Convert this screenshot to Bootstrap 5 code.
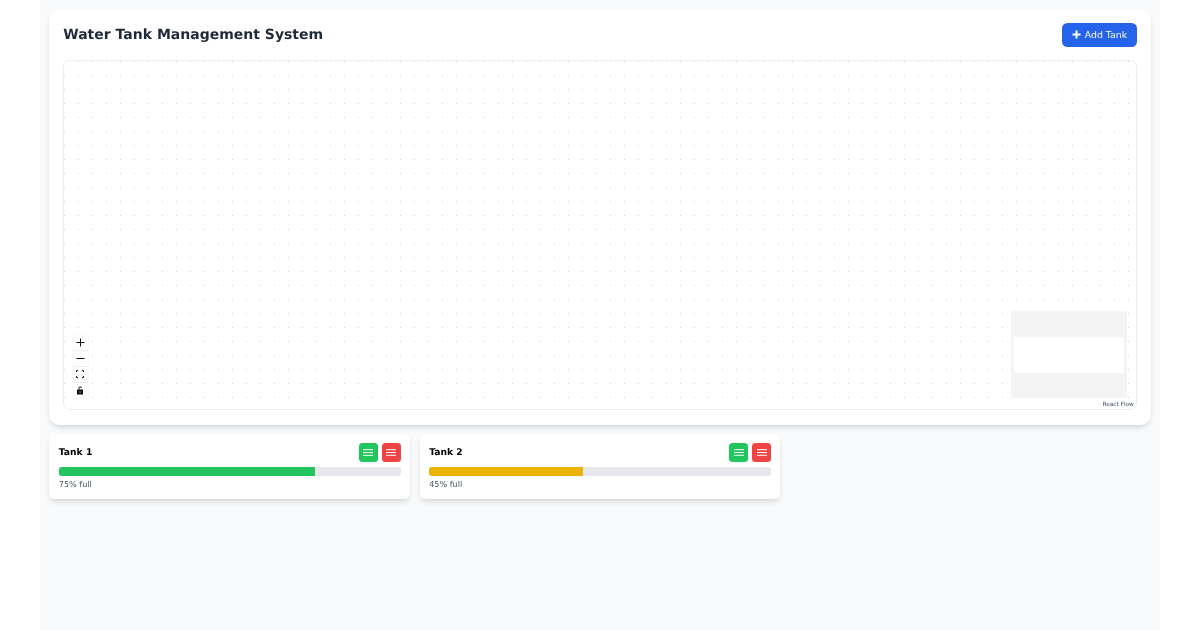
<!DOCTYPE html>
<html lang="en">
<head>
<meta charset="utf-8">
<title>Water Tank Management System</title>
<link href="https://cdn.jsdelivr.net/npm/bootstrap@5.3.0/dist/css/bootstrap.min.css" rel="stylesheet">
<style>
html,body{height:100%;background:#fff;overflow:hidden}
body{font-family:"DejaVu Sans",sans-serif;text-rendering:geometricPrecision}
.shell{width:1120px;height:630px;margin:0 auto;background:#f9fafb;padding:9.2px;will-change:transform}
.panel{background:#fff;border-radius:11px;padding:13.8px 14px;height:416px;box-shadow:0 4px 6px -1px rgba(0,0,0,.1),0 2px 4px -2px rgba(0,0,0,.1);margin-bottom:9px}
.panel-title{font-size:14px;font-weight:700;color:#1f2937;margin:0;line-height:24px}
.add-btn{background:#2563eb;color:#fff;border:0;border-radius:5.5px;height:24px;width:75px;padding:0 0 0 10px;font-size:9.35px;gap:4px;white-space:nowrap}
.add-btn svg{display:block;flex:none}
.flow{position:relative;height:350px;margin-top:13.5px;border:1px solid #eceef1;border-radius:7px;overflow:hidden;background-color:#fff}
.dots{position:absolute;left:-.2px;top:-.5px;width:1074px;height:351px;display:block}
.ctl{position:absolute;left:8.4px;bottom:11.2px;width:15.7px;box-shadow:0 0 2px rgba(0,0,0,.08);background:#fff}
.ctl-btn{height:15.8px;display:flex;align-items:center;justify-content:center;border-bottom:1px solid #eee;background:#fefefe}
.ctl-btn:last-child{border-bottom:0}
.mini{position:absolute;right:8.7px;bottom:11.5px;width:116.300px;height:87px;background:#f3f4f3;display:flex;align-items:center;justify-content:center}
.mini-view{width:110px;height:36px;background:#fff;margin-top:1px}
.attrib{position:absolute;right:2px;bottom:0;font-size:5.8px;line-height:8px;color:#4b5563;background:rgba(255,255,255,.5)}
.tanks{gap:9.6px}
.tank{width:360.8px;height:65px;background:#fff;border-radius:5.5px;padding:9.2px 9px 9.2px 9.6px;box-shadow:0 4px 6px -1px rgba(0,0,0,.1),0 2px 4px -2px rgba(0,0,0,.1)}
.tank-name{font-size:9.2px;font-weight:700;color:#000;margin:0;line-height:18px}
.sq{width:19px;height:19px;border:0;padding:0;border-radius:3.5px;display:flex;align-items:center;justify-content:center}
.sq.go{background:#22c55e}
.sq.stop{background:#ef4444}
.meter{height:9.2px;background:#e5e7eb;border-radius:3px;margin-top:4.500px;overflow:hidden;--bs-progress-height:9.2px}
.meter .progress-bar.ok{background:#22c55e}
.meter .progress-bar.mid{background:#eab308}
.pct{font-size:8.1px;color:#4b5563;line-height:12px;margin-top:1.500px}
</style>
</head>
<body>
<div class="shell">
  <div class="panel">
    <div class="d-flex justify-content-between align-items-center">
      <h1 class="panel-title">Water Tank Management System</h1>
      <button class="add-btn d-flex align-items-center" type="button">
        <svg width="9" height="9" viewBox="0 0 9 9"><path d="M4.500 .5v8M.5 4.500h8" stroke="#fff" stroke-width="2"/></svg>
        <span>Add Tank</span>
      </button>
    </div>
    <div class="flow">
      <svg class="dots" aria-hidden="true"><defs><pattern id="dotgrid" width="14" height="14" patternUnits="userSpaceOnUse"><rect width="1" height="1" fill="#d2d2d2" shape-rendering="crispEdges"/></pattern></defs><rect width="100%" height="100%" fill="url(#dotgrid)"/></svg>
      <div class="mini"><div class="mini-view"></div></div>
      <div class="ctl">
        <div class="ctl-btn"><svg width="9" height="9" viewBox="0 0 9 9"><path d="M4.500 .5v8M.5 4.500h8" stroke="#111" stroke-width="1"/></svg></div>
        <div class="ctl-btn"><svg width="9" height="9" viewBox="0 0 9 9"><path d="M.5 4.500h8" stroke="#111" stroke-width="1.100"/></svg></div>
        <div class="ctl-btn"><svg width="8" height="8" viewBox="0 0 8 8" fill="none"><path d="M.5 2v-1.500H2M6 .5h1.500V2M7.500 6v1.500H6M2 7.500H.5V6" stroke="#111" stroke-width="1"/></svg></div>
        <div class="ctl-btn"><svg width="8" height="9" viewBox="0 0 8 9"><path d="M1 3.500h6v5H1z" fill="#111"/><path d="M3 3.500V2A1.200 1.200 0 0 1 5.400 2" fill="none" stroke="#111" stroke-width="1"/><rect x="3.500" y="5.500" width="1" height="1" fill="#fff"/></svg></div>
      </div>
      <div class="attrib">React Flow</div>
    </div>
  </div>
  <div class="tanks d-flex">
    <div class="tank">
      <div class="d-flex justify-content-between align-items-center">
        <h2 class="tank-name">Tank 1</h2>
        <div class="d-flex gap-1">
          <button class="sq go" type="button" aria-label="Fill"><svg width="10" height="7" viewBox="0 0 10 7"><path d="M0 .7h10M0 3.500h10M0 6.300h10" stroke="#fff" stroke-width="1"/></svg></button>
          <button class="sq stop" type="button" aria-label="Drain"><svg width="10" height="7" viewBox="0 0 10 7"><path d="M0 .7h10M0 3.500h10M0 6.300h10" stroke="#fff" stroke-width="1"/></svg></button>
        </div>
      </div>
      <div class="progress meter"><div class="progress-bar ok" style="width:75%"></div></div>
      <div class="pct">75% full</div>
    </div>
    <div class="tank">
      <div class="d-flex justify-content-between align-items-center">
        <h2 class="tank-name">Tank 2</h2>
        <div class="d-flex gap-1">
          <button class="sq go" type="button" aria-label="Fill"><svg width="10" height="7" viewBox="0 0 10 7"><path d="M0 .7h10M0 3.500h10M0 6.300h10" stroke="#fff" stroke-width="1"/></svg></button>
          <button class="sq stop" type="button" aria-label="Drain"><svg width="10" height="7" viewBox="0 0 10 7"><path d="M0 .7h10M0 3.500h10M0 6.300h10" stroke="#fff" stroke-width="1"/></svg></button>
        </div>
      </div>
      <div class="progress meter"><div class="progress-bar mid" style="width:45%"></div></div>
      <div class="pct">45% full</div>
    </div>
  </div>
</div>
<script src="https://cdn.jsdelivr.net/npm/bootstrap@5.3.0/dist/js/bootstrap.bundle.min.js"></script>
</body>
</html>
